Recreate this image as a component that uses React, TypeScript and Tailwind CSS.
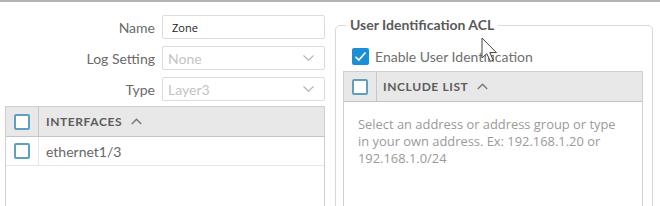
import React from 'react'

function Chevron() {
  return (
    <svg width="11" height="6" viewBox="0 0 11 6" className="shrink-0">
      <polyline points="0.5,0.5 5.5,5.2 10.5,0.5" fill="none" stroke="#b4b4b4" strokeWidth="1.1" />
    </svg>
  )
}

function Caret() {
  return (
    <svg width="11" height="7" viewBox="0 0 11 7" className="ml-[9px] shrink-0">
      <polyline points="0.8,6 5.5,1.2 10.2,6" fill="none" stroke="#777" strokeWidth="1.4" />
    </svg>
  )
}

function Box({ checked = false }: { checked?: boolean }) {
  if (checked) {
    return (
      <div className="w-[17px] h-[17px] rounded-[2px] bg-[#1b8fd6] flex items-center justify-center shrink-0">
        <svg width="13" height="11" viewBox="0 0 13 11">
          <polyline points="1.5,5.8 4.8,9 11.5,1.5" fill="none" stroke="#fff" strokeWidth="1.6" />
        </svg>
      </div>
    )
  }
  return <div className="w-[16px] h-[16px] rounded-[2px] border-2 border-[#5f9fbf] bg-white shrink-0" />
}

function FieldRow({ label, children }: { label: string; children: React.ReactNode }) {
  return (
    <div className="flex items-center h-[24px]">
      <div className="w-[150px] text-right text-[14px] text-[#6a6a6a]">{label}</div>
      <div className="ml-[7px] w-[163px] h-[24px] border border-[#dcdcdc] rounded-[2px] flex items-center">
        {children}
      </div>
    </div>
  )
}

export default function App() {
  return (
    <div className="relative w-[660px] h-[206px] overflow-hidden bg-white font-['Lato',sans-serif]">
      <div className="h-[2px] bg-[#b3b3b3]" />
      <div className="flex">
        {/* left column */}
        <div className="w-[330px] pl-[5px] pt-[13px]">
          <div className="flex flex-col gap-[7px]">
            <FieldRow label="Name">
              <span className="pl-[9px] pt-[2px] text-[11px] text-[#222] font-['Open_Sans',sans-serif]">Zone</span>
            </FieldRow>
            <FieldRow label="Log Setting">
              <span className="flex-1 pl-[5px] text-[14px] text-[#c4c4c4]">None</span>
              <span className="mr-[10px]"><Chevron /></span>
            </FieldRow>
            <FieldRow label="Type">
              <span className="flex-1 pl-[5px] text-[14px] text-[#c4c4c4]">Layer3</span>
              <span className="mr-[10px]"><Chevron /></span>
            </FieldRow>
          </div>

          <div className="mt-[5px] w-[320px] border border-[#cfcfcf] h-[200px]">
            <div className="flex h-[30px] bg-[#e8e8e8] border-b border-[#c4c4c4]">
              <div className="w-[33px] flex items-center justify-center border-r border-[#c8c8c8]">
                <Box />
              </div>
              <div className="flex items-center pl-[7px] text-[12px] font-bold tracking-[0.6px] text-[#5c5c5c]">
                INTERFACES
                <Caret />
              </div>
            </div>
            <div className="flex h-[29px] border-b border-[#e6e6e6]">
              <div className="w-[33px] flex items-center justify-center border-r border-[#e6e6e6]">
                <Box />
              </div>
              <div className="flex items-center pl-[7px] text-[14px] text-[#666]">ethernet1/3</div>
            </div>
          </div>
        </div>

        {/* right column */}
        <div className="pl-[5px] pt-[14px]">
          <fieldset className="w-[318px] h-[260px] border border-[#d9d9d9] rounded-[5px] pl-[7px]">
            <legend className="ml-[3px] px-[4px] text-[14px] leading-[18px] font-bold text-[#5a5a5a]">
              User Identification ACL
            </legend>
            <div className="mt-[13px] h-[18px] flex items-center pl-[9px]">
              <Box checked />
              <span className="ml-[6px] text-[14px] text-[#707070]">Enable User Identification</span>
            </div>
            <div className="mt-[6px] w-[300px] border border-[#cfcfcf] h-[200px]">
              <div className="flex h-[30px] bg-[#e8e8e8] border-b border-[#c4c4c4]">
                <div className="w-[33px] flex items-center justify-center border-r border-[#c8c8c8]">
                  <Box />
                </div>
                <div className="flex items-center pl-[6px] text-[12px] font-bold tracking-[0.6px] text-[#5c5c5c]">
                  INCLUDE LIST
                  <Caret />
                </div>
              </div>
              <div className="pt-[14px] pl-[14px] text-[12.9px] leading-[17px] text-[#9a9a9a] font-['Open_Sans',sans-serif]">
                <div>Select an address or address group or type</div>
                <div>in your own address. Ex: 192.168.1.20 or</div>
                <div>192.168.1.0/24</div>
              </div>
            </div>
          </fieldset>
        </div>
      </div>

      {/* mouse pointer */}
      <svg className="absolute left-[481px] top-[37px]" width="18" height="26" viewBox="0 0 18 26">
        <path d="M1 1 L1 21 L5.8 16.6 L9.4 24.4 L12.2 23.1 L8.8 15.6 L15.4 15.6 Z" fill="#fff" stroke="#444" strokeWidth="1" strokeLinejoin="round" />
      </svg>
    </div>
  )
}
